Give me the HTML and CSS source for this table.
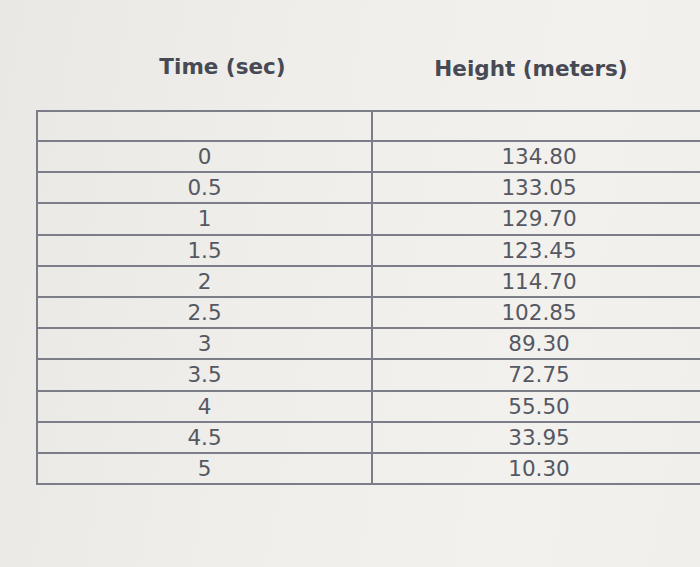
FILE: index.html
```html
<!DOCTYPE html>
<html>
<head>
<meta charset="utf-8">
<link rel="stylesheet" href="styles.css">
</head>
<body>
<div class="page">
  <div class="heads">
    <div class="head head-time">Time (sec)</div>
    <div class="head head-height">Height (meters)</div>
  </div>
  <table class="data">
    <tr class="blank"><td></td><td></td></tr>
    <tr><td>0</td><td>134.80</td></tr>
    <tr><td>0.5</td><td>133.05</td></tr>
    <tr><td>1</td><td>129.70</td></tr>
    <tr><td>1.5</td><td>123.45</td></tr>
    <tr><td>2</td><td>114.70</td></tr>
    <tr><td>2.5</td><td>102.85</td></tr>
    <tr><td>3</td><td>89.30</td></tr>
    <tr><td>3.5</td><td>72.75</td></tr>
    <tr><td>4</td><td>55.50</td></tr>
    <tr><td>4.5</td><td>33.95</td></tr>
    <tr><td>5</td><td>10.30</td></tr>
  </table>
</div>
</body>
</html>
```
FILE: styles.css
```css
html, body {
  margin: 0;
  padding: 0;
}
body {
  width: 700px;
  height: 567px;
  overflow: hidden;
  background: linear-gradient(100deg, #e9e8e4 0%, #efeeea 40%, #f2f1ee 75%, #f0efec 100%);
  font-family: "DejaVu Sans", Verdana, sans-serif;
}
.page {
  padding-top: 52px;
}
.heads {
  display: grid;
  grid-template-columns: 335px 336px;
  margin-left: 36px;
  height: 58px;
}
.head {
  font-weight: bold;
  font-size: 21.5px;
  color: #474a54;
  text-align: center;
  line-height: 30px;
}
.head-time {
  padding-left: 38px;
}
.head-height {
  padding-right: 16px;
  padding-top: 2px;
}
.data {
  border-collapse: collapse;
  margin-left: 36px;
  width: 671px;
  table-layout: fixed;
}
.data td {
  border: 2px solid #7c7d89;
  height: 29.2px;
  padding: 0;
  text-align: center;
  font-size: 21.5px;
  color: #555862;
  line-height: 29px;
}
.data td:first-child {
  width: 333px;
}
.data tr.blank td {
  height: 28px;
}
```
